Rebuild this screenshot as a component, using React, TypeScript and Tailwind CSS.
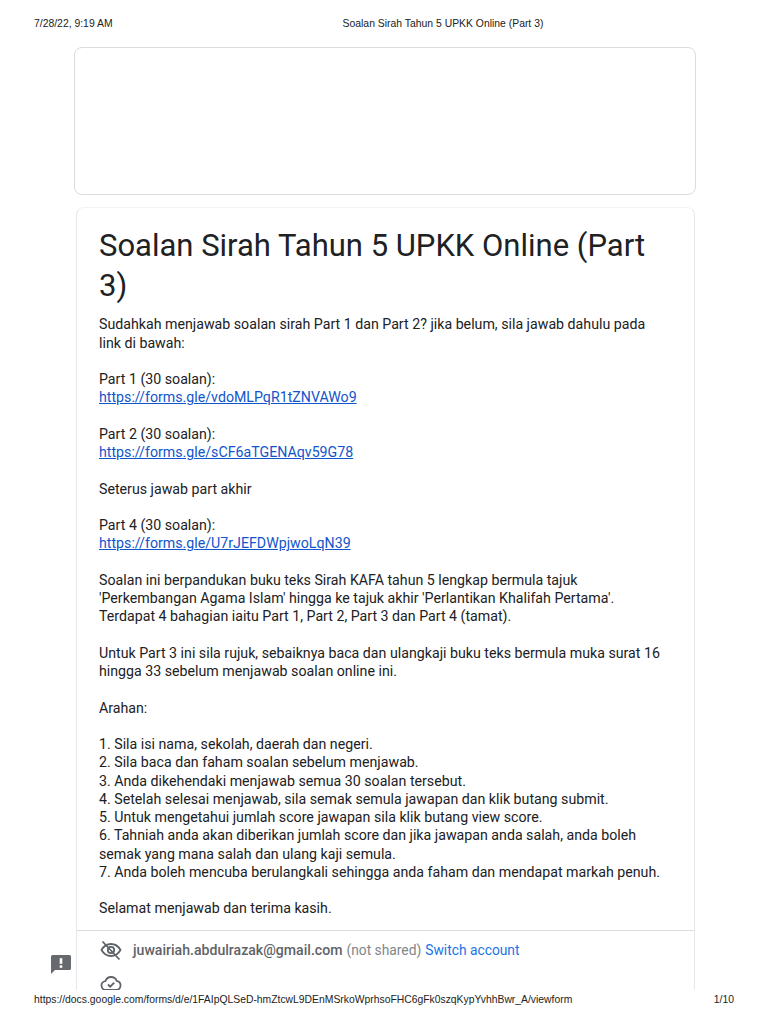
import React from "react";

const Body = ({ children }: { children: React.ReactNode }) => (
  <p className="min-h-[18.25px]">{children}</p>
);
const A = ({ children }: { children: React.ReactNode }) => (
  <p><a className="text-[#1155cc] underline" href="#">{children}</a></p>
);

export default function App() {
  return (
    <div className="relative w-[768px] h-[1024px] overflow-hidden bg-white flex flex-col font-['Roboto',sans-serif]">
      <header className="h-[47px] shrink-0 pt-[17px] pl-[34px] pr-[34px] flex text-[10.4px] leading-[13px] text-[#222] font-['Liberation_Sans',sans-serif]">
        <span>7/28/22, 9:19 AM</span>
        <span className="ml-[230px]">Soalan Sirah Tahun 5 UPKK Online (Part 3)</span>
      </header>
      <div className="ml-[74px] w-[622px] h-[148px] shrink-0 rounded-lg border border-[#dadce0] bg-white" />
      <main className="ml-[76px] w-[619px] mt-[12px] h-[783px] shrink-0 overflow-hidden rounded-t-lg border-x border-t border-[#e6e7ea] border-t-[#f3f3f4] bg-white">
        <div className="pl-[22px] pt-[18px] pr-[29px]">
          <h1 className="text-[31px] leading-[40px] text-[#202124]">Soalan Sirah Tahun 5 UPKK Online (Part 3)</h1>
          <div className="mt-[9.300px] text-[14.2px] leading-[18.25px] text-[#202124]">
            <Body>Sudahkah menjawab soalan sirah Part 1 dan Part 2? jika belum, sila jawab dahulu pada link di bawah:</Body>
            <Body>{" "}</Body>
            <Body>Part 1 (30 soalan):</Body>
            <A>https://forms.gle/vdoMLPqR1tZNVAWo9</A>
            <Body>{" "}</Body>
            <Body>Part 2 (30 soalan):</Body>
            <A>https://forms.gle/sCF6aTGENAqv59G78</A>
            <Body>{" "}</Body>
            <Body>Seterus jawab part akhir</Body>
            <Body>{" "}</Body>
            <Body>Part 4 (30 soalan):</Body>
            <A>https://forms.gle/U7rJEFDWpjwoLqN39</A>
            <Body>{" "}</Body>
            <Body>Soalan ini berpandukan buku teks Sirah KAFA tahun 5 lengkap bermula tajuk 'Perkembangan Agama Islam' hingga ke tajuk akhir 'Perlantikan Khalifah Pertama'. Terdapat 4 bahagian iaitu Part 1, Part 2, Part 3 dan Part 4 (tamat).</Body>
            <Body>{" "}</Body>
            <Body>Untuk Part 3 ini sila rujuk, sebaiknya baca dan ulangkaji buku teks bermula muka surat 16 hingga 33 sebelum menjawab soalan online ini.</Body>
            <Body>{" "}</Body>
            <Body>Arahan:</Body>
            <Body>{" "}</Body>
            <Body>1. Sila isi nama, sekolah, daerah dan negeri.</Body>
            <Body>2. Sila baca dan faham soalan sebelum menjawab.</Body>
            <Body>3. Anda dikehendaki menjawab semua 30 soalan tersebut.</Body>
            <Body>4. Setelah selesai menjawab, sila semak semula jawapan dan klik butang submit.</Body>
            <Body>5. Untuk mengetahui jumlah score jawapan sila klik butang view score.</Body>
            <Body>6. Tahniah anda akan diberikan jumlah score dan jika jawapan anda salah, anda boleh semak yang mana salah dan ulang kaji semula.</Body>
            <Body>7. Anda boleh mencuba berulangkali sehingga anda faham dan mendapat markah penuh.</Body>
            <Body>{" "}</Body>
            <Body>Selamat menjawab dan terima kasih.</Body>
          </div>
        </div>
        <div className="mt-[12.700px] border-t border-[#dadce0] pl-[22px] pt-[8px]">
          <div className="flex items-center h-[22px] text-[13.8px] text-[#5f6368]">
            <svg className="w-[24px] h-[24px] mr-[10px] shrink-0" viewBox="0 0 24 24" fill="none" stroke="#5f6368" strokeWidth="1.800">
              <path d="M2.500 12c2.300-4 5.600-6 9.500-6s7.200 2 9.500 6c-2.300 4-5.600 6-9.500 6s-7.200-2-9.500-6Z" />
              <circle cx="12" cy="12" r="3.200" />
              <path d="M3.500 3.500 20.500 21.500" />
            </svg>
            <span className="font-medium text-[14.1px]">juwairiah.abdulrazak@gmail.com</span>
            <span className="ml-[4px] text-[#80868b]">(not shared)</span>
            <span className="ml-[4px] text-[#1a73e8]">Switch account</span>
          </div>
          <div className="mt-[10px]">
            <svg className="w-[24px] h-[24px]" viewBox="0 0 24 24" fill="none" stroke="#5f6368" strokeWidth="1.800">
              <path d="M7 19a4.500 4.500 0 0 1-.6-8.960A6 6 0 0 1 17.700 9.900 4.600 4.600 0 0 1 17.500 19Z" />
              <path d="m9 13.500 2.200 2.200 4-4" />
            </svg>
          </div>
        </div>
      </main>
      <footer className="flex justify-between pl-[34px] pr-[34px] pt-[3px] text-[10.36px] leading-[13px] text-[#222] font-['Liberation_Sans',sans-serif]">
        <span>https://docs.google.com/forms/d/e/1FAIpQLSeD-hmZtcwL9DEnMSrkoWprhsoFHC6gFk0szqKypYvhhBwr_A/viewform</span>
        <span>1/10</span>
      </footer>
      <div className="absolute left-[51px] top-[955px]">
        <svg className="w-[20px] h-[19px]" viewBox="0 0 20 19">
          <path d="M1.500 0h17A1.500 1.500 0 0 1 20 1.500v12a1.500 1.500 0 0 1-1.500 1.500H4l-4 4V1.500A1.500 1.500 0 0 1 1.500 0Z" fill="#666a6e" />
          <rect x="8.700" y="3.200" width="2.600" height="5.600" fill="#fff" />
          <rect x="8.700" y="10.300" width="2.600" height="2.500" fill="#fff" />
        </svg>
      </div>
    </div>
  );
}
